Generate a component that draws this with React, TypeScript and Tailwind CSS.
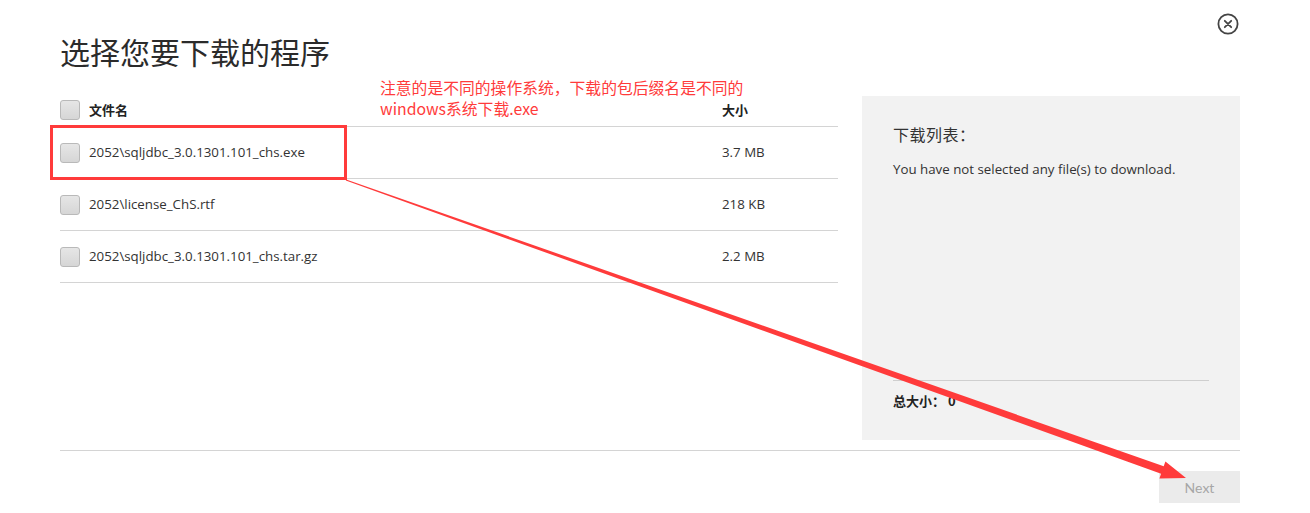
import React from 'react';

const files = [
  { name: '2052\\sqljdbc_3.0.1301.101_chs.exe', size: '3.7 MB' },
  { name: '2052\\license_ChS.rtf', size: '218 KB' },
  { name: '2052\\sqljdbc_3.0.1301.101_chs.tar.gz', size: '2.2 MB' },
];

function Checkbox() {
  return (
    <span className="block w-[20px] h-[20px] rounded-[3px] border border-[#b9b9b9] bg-gradient-to-b from-[#e6e6e6] to-[#d6d6d6] shrink-0" />
  );
}

export default function App() {
  return (
    <div
      className="relative w-[1310px] h-[513px] bg-white overflow-hidden text-[#333]"
      style={{ fontFamily: '"Open Sans", "Noto Sans", "Noto Sans CJK SC", sans-serif' }}
    >
      {/* close */}
      <button className="absolute left-[1217px] top-[13px] w-[22px] h-[22px]">
        <svg width="22" height="22" viewBox="0 0 22 22" fill="none" stroke="#444" strokeWidth="1.8">
          <circle cx="11" cy="11" r="9.6" />
          <path d="M7.8 7.8 L14.2 14.2 M14.2 7.8 L7.8 14.2" strokeLinecap="round" />
        </svg>
      </button>

      <div className="pl-[60px] pr-[70px] pt-[34px]">
        <h1 className="text-[30px] leading-[34px] text-[#2b2b2b] font-normal" style={{ fontFamily: '"Noto Sans CJK SC", sans-serif' }}>
          选择您要下载的程序
        </h1>

        <div className="flex gap-[24px] mt-[28px]">
          {/* file table */}
          <div className="w-[778px]">
            <div className="flex items-center h-[31px] border-b border-[#d4d4d4] pb-[2px]">
              <Checkbox />
              <span className="ml-[9px] text-[13px] font-bold text-[#222]" style={{ fontFamily: '"Noto Sans CJK SC", sans-serif' }}>文件名</span>
              <span className="ml-auto w-[116px] text-[13px] font-bold text-[#222]" style={{ fontFamily: '"Noto Sans CJK SC", sans-serif' }}>大小</span>
            </div>
            {files.map((f) => (
              <div key={f.name} className="flex items-center h-[52px] border-b border-[#d4d4d4]">
                <Checkbox />
                <span className="ml-[9px] text-[13.3px] text-[#333]">{f.name}</span>
                <span className="ml-auto w-[116px] text-[13.3px] text-[#333]">{f.size}</span>
              </div>
            ))}
          </div>

          {/* download list panel */}
          <div className="w-[378px] h-[344px] bg-[#f2f2f2] flex flex-col px-[31px] pt-[26px] pb-[28px]">
            <div className="text-[16px] leading-[24px] text-[#333] tracking-[0.5px]" style={{ fontFamily: '"Noto Sans CJK SC", sans-serif' }}>下载列表：</div>
            <div className="mt-[14px] text-[13.3px] text-[#333]">You have not selected any file(s) to download.</div>
            <div className="flex-1" />
            <div className="border-t border-[#cfcfcf] pt-[7px]">
              <span className="text-[13px] font-bold text-[#222]" style={{ fontFamily: '"Noto Sans CJK SC", sans-serif' }}>总大小： 0</span>
            </div>
          </div>
        </div>

        <div className="mt-[10px] border-t border-[#d4d4d4]" />

        <div className="flex justify-end mt-[20px]">
          <button className="w-[81px] h-[32px] bg-[#ebebeb] text-[14px] text-[#a6a6a6]" style={{ fontFamily: 'Lato, sans-serif' }}>
            Next
          </button>
        </div>
      </div>

      {/* annotation */}
      <div
        className="absolute left-[380px] top-[77px] text-[15.8px] leading-[21px] text-[#ff3b3b]"
        style={{ fontFamily: '"Noto Sans CJK SC", sans-serif' }}
      >
        <div>注意的是不同的操作系统，下载的包后缀名是不同的</div>
        <div>windows系统下载.exe</div>
      </div>
      <div className="absolute left-[50px] top-[125px] w-[297px] h-[55px] border-[3px] border-[#ff3b3b]" />
      <svg className="absolute left-0 top-0 pointer-events-none" width="1310" height="513">
        <polygon
          fill="#ff3b3b"
          points="346.2,179.4 1163.7,466.2 1165.4,461.5 1186,478 1159.4,478.5 1161.1,473.8 345.8,180.6"
        />
      </svg>
    </div>
  );
}
